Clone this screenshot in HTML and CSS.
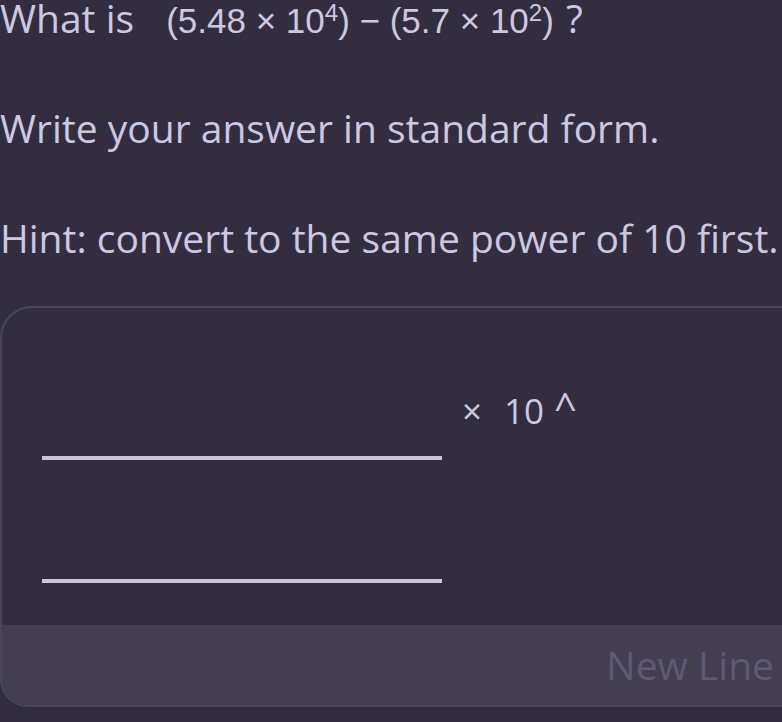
FILE: index.html
```html
<!DOCTYPE html>
<html lang="en">
<head>
    <meta charset="UTF-8">
    <meta name="viewport" content="width=device-width, initial-scale=1.0">
    <title>Standard form question</title>
    <link rel="stylesheet" href="styles.css">
</head>
<body>
    <div class="question">
        <p class="line">What is <span class="math">(5.48 × 10<sup>4</sup>) − (5.7 × 10<sup>2</sup>)</span> ?</p>
        <p class="line">Write your answer in standard form.</p>
        <p class="line">Hint: convert to the same power of 10 first.</p>
    </div>
    <div class="answer-box">
        <div class="answer-row">
            <div class="blank"></div>
            <div class="times">
                <span class="sign">×</span>
                <span class="ten">10</span>
                <span class="caret">^</span>
            </div>
            <div class="blank"></div>
        </div>
        <div class="new-line">New Line</div>
    </div>
</body>
</html>
```

FILE: styles.css
```css
* {
    margin: 0;
    padding: 0;
    box-sizing: border-box;
}
body {
    background: #322e40;
    color: #cec7e0;
    font-family: "Open Sans", "Noto Sans", sans-serif;
    overflow: hidden;
    height: 100vh;
}
.question {
    padding-bottom: 50px;
}
.line {
    font-size: 39px;
    line-height: 36px;
    height: 36px;
    margin-bottom: 74px;
    white-space: nowrap;
}
.line:last-child {
    margin-bottom: 0;
}
.math {
    font-family: "Liberation Sans", Arial, sans-serif;
    font-size: 35px;
    line-height: 36px;
    margin-left: 22px;
    margin-right: 2px;
}
.math sup {
    font-size: 24px;
    line-height: 0;
    vertical-align: 12px;
}
.answer-box {
    margin-right: -30px;
    border: 2px solid #4a4559;
    border-radius: 32px 0 0 28px;
    overflow: hidden;
}
.answer-row {
    display: flex;
    flex-wrap: wrap;
    align-items: center;
    row-gap: 23px;
    padding: 52px 0 42px 40px;
}
.blank {
    width: 400px;
    height: 100px;
    border-bottom: 4px solid #cdc3e0;
}
.times {
    display: flex;
    align-items: center;
    font-size: 35px;
    margin-left: 20px;
}
.times .sign {
    margin-right: 22px;
}
.times .caret {
    margin-left: 10px;
    font-size: 40px;
    margin-top: -8px;
}
.new-line {
    background: #433e50;
    color: #5f5973;
    font-size: 39px;
    height: 80px;
    line-height: 80px;
    text-align: right;
    padding-right: 36px;
}
```
